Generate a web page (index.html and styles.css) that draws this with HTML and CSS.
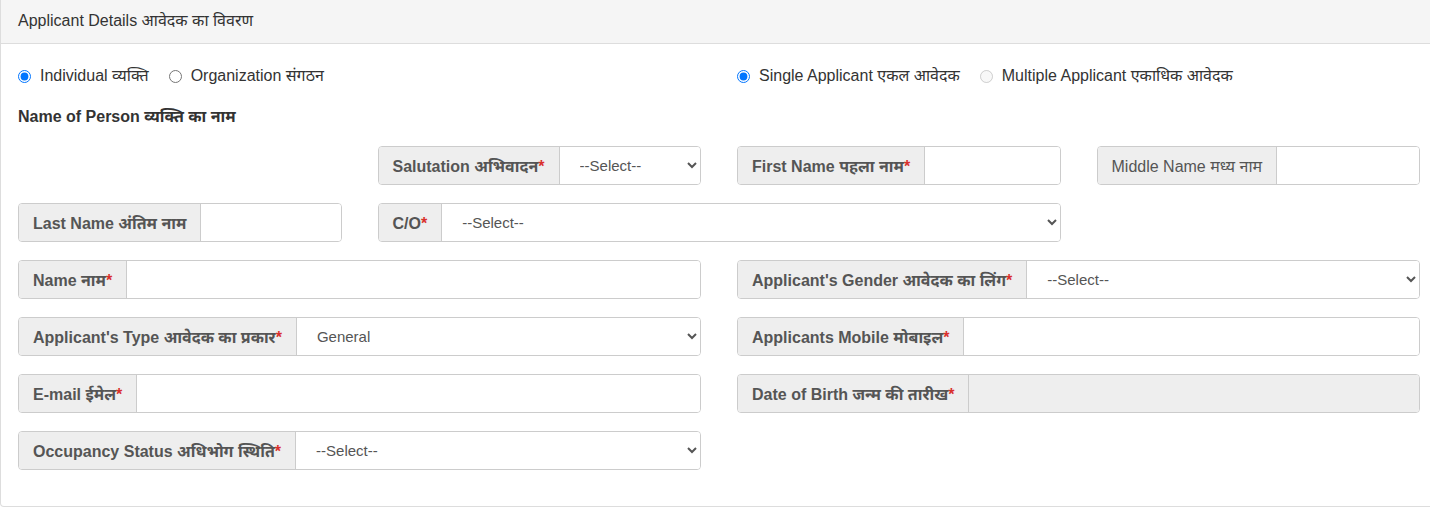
FILE: index.html
```html
<!DOCTYPE html>
<html lang="hi">
<head>
  <meta charset="UTF-8" />
  <meta name="viewport" content="width=device-width, initial-scale=1.0" />
  <title>Applicant Details</title>
  <link rel="stylesheet" href="styles.css">
</head>
<body>
  <div class="panel">
    <div class="panel-heading">Applicant Details आवेदक का विवरण</div>

    <div class="panel-body">
      <div class="grid options">
        <div class="radio-group span-2">
          <label class="radio"><input type="radio" name="applicant_kind" checked> Individual व्यक्ति</label>
          <label class="radio"><input type="radio" name="applicant_kind"> Organization संगठन</label>
        </div>
        <div class="radio-group span-2">
          <label class="radio"><input type="radio" name="applicant_count" checked> Single Applicant एकल आवेदक</label>
          <label class="radio"><input type="radio" name="applicant_count" disabled> Multiple Applicant एकाधिक आवेदक</label>
        </div>
      </div>

      <h4 class="section-title">Name of Person व्यक्ति का नाम</h4>

      <div class="grid fields">
        <!-- row 1 -->
        <div class="input-group start-2">
          <span class="addon">Salutation अभिवादन<i class="req">*</i></span>
          <select class="form-control">
            <option>--Select--</option>
            <option>Shri</option>
            <option>Smt.</option>
            <option>Kumari</option>
          </select>
        </div>
        <div class="input-group">
          <span class="addon">First Name पहला नाम<i class="req">*</i></span>
          <input class="form-control" type="text" name="first_name">
        </div>
        <div class="input-group">
          <span class="addon light">Middle Name मध्य नाम</span>
          <input class="form-control" type="text" name="middle_name">
        </div>

        <!-- row 2 -->
        <div class="input-group">
          <span class="addon">Last Name अंतिम नाम</span>
          <input class="form-control" type="text" name="last_name">
        </div>
        <div class="input-group span-2">
          <span class="addon">C/O<i class="req">*</i></span>
          <select class="form-control">
            <option>--Select--</option>
            <option>S/O</option>
            <option>D/O</option>
            <option>W/O</option>
          </select>
        </div>

        <!-- row 3 -->
        <div class="input-group span-2">
          <span class="addon">Name नाम<i class="req">*</i></span>
          <input class="form-control" type="text" name="name">
        </div>
        <div class="input-group span-2">
          <span class="addon">Applicant's Gender आवेदक का लिंग<i class="req">*</i></span>
          <select class="form-control">
            <option>--Select--</option>
            <option>Male</option>
            <option>Female</option>
            <option>Other</option>
          </select>
        </div>

        <!-- row 4 -->
        <div class="input-group span-2">
          <span class="addon">Applicant's Type आवेदक का प्रकार<i class="req">*</i></span>
          <select class="form-control">
            <option>General</option>
            <option>BPL</option>
          </select>
        </div>
        <div class="input-group span-2">
          <span class="addon">Applicants Mobile मोबाइल<i class="req">*</i></span>
          <input class="form-control" type="text" name="mobile">
        </div>

        <!-- row 5 -->
        <div class="input-group span-2">
          <span class="addon">E-mail ईमेल<i class="req">*</i></span>
          <input class="form-control" type="text" name="email">
        </div>
        <div class="input-group span-2">
          <span class="addon">Date of Birth जन्म की तारीख<i class="req">*</i></span>
          <input class="form-control" type="text" name="dob" readonly>
        </div>

        <!-- row 6 -->
        <div class="input-group span-2">
          <span class="addon">Occupancy Status अधिभोग स्थिति<i class="req">*</i></span>
          <select class="form-control">
            <option>--Select--</option>
            <option>Owner</option>
            <option>Tenant</option>
          </select>
        </div>
      </div>
    </div>
  </div>
</body>
</html>
```

FILE: styles.css
```css
:root {
  --border: #dddddd;
  --field-border: #cccccc;
  --addon-bg: #eeeeee;
  --text: #333333;
  --muted: #555555;
  --required: #d9302c;
}

html,
body {
  margin: 0;
  overflow: hidden;
}

body {
  font-family: "Liberation Sans", Arial, "Noto Sans Devanagari", "Lohit Devanagari", sans-serif;
  font-size: 16px;
  color: var(--text);
  background: #fff;
}

.panel {
  width: 1438px;
  box-sizing: border-box;
  border: 1px solid var(--border);
  border-top: none;
  border-radius: 0 0 4px 4px;
}

.panel-heading {
  background-color: #f5f5f5;
  border-bottom: 1px solid var(--border);
  padding: 9px 17px 10px;
  line-height: 24px;
}

.panel-body {
  padding: 22px 17px 36px;
}

.grid {
  display: grid;
  grid-template-columns: repeat(4, 1fr);
  column-gap: 36px;
}

.span-2 {
  grid-column: span 2;
}

.start-2 {
  grid-column-start: 2;
}

.radio-group {
  display: flex;
  align-items: center;
  gap: 20px;
  line-height: 20px;
}

.radio {
  display: flex;
  align-items: center;
  gap: 9px;
  cursor: pointer;
}

.radio input {
  margin: 0;
  width: 13px;
  height: 13px;
}

.section-title {
  margin: 21px 0 19px;
  font-size: 16px;
  line-height: 20px;
  font-weight: bold;
}

.fields {
  row-gap: 18px;
}

.input-group {
  display: flex;
  height: 39px;
  box-sizing: border-box;
  border: 1px solid var(--field-border);
  border-radius: 4px;
  overflow: hidden;
  background: #fff;
}

.addon {
  display: flex;
  align-items: center;
  padding: 3px 14px 0;
  line-height: 20px;
  background-color: var(--addon-bg);
  border-right: 1px solid var(--field-border);
  color: var(--muted);
  font-weight: bold;
  white-space: nowrap;
}

.addon.light {
  font-weight: normal;
}

.req {
  font-style: normal;
  color: var(--required);
}

.form-control {
  flex: 1;
  min-width: 0;
  border: none;
  outline: none;
  padding: 0 8px 0 18px;
  font-family: inherit;
  font-size: 15px;
  color: var(--muted);
  background: #fff;
}

select.form-control {
  padding-left: 16px;
  padding-right: 6px;
}

.form-control[readonly] {
  background-color: var(--addon-bg);
}
```
